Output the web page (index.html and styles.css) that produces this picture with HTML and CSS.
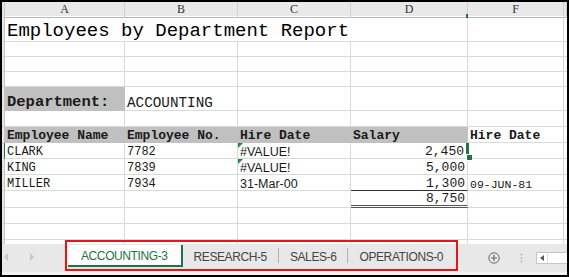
FILE: index.html
```html
<!DOCTYPE html>
<html lang="en">
  <head>
    <meta charset="UTF-8" />
    <title>Employees by Department Report</title>
    <link rel="stylesheet" href="styles.css">
  </head>
  <body>
    <div class="window">
      <!-- Sheet grid -->
      <div class="sheet">
        <div class="row heads">
          <div class="rh"></div>
          <div class="ch">A</div>
          <div class="ch">B</div>
          <div class="ch">C</div>
          <div class="ch ch-mark">D</div>
          <div class="ch">F</div>
          <div class="ch"></div>
        </div>
        <div class="row tall">
          <div class="rh"></div>
          <div class="c title">Employees by Department Report</div>
          <div class="c"></div>
          <div class="c"></div>
        </div>
        <div class="row short">
          <div class="rh"></div>
          <div class="c"></div><div class="c"></div><div class="c"></div>
          <div class="c"></div><div class="c"></div><div class="c"></div>
        </div>
        <div class="row short">
          <div class="rh"></div>
          <div class="c"></div><div class="c"></div><div class="c"></div>
          <div class="c"></div><div class="c"></div><div class="c"></div>
        </div>
        <div class="row short">
          <div class="rh"></div>
          <div class="c"></div><div class="c"></div><div class="c"></div>
          <div class="c"></div><div class="c"></div><div class="c"></div>
        </div>
        <div class="row dept">
          <div class="rh"></div>
          <div class="c fill dept-label">Department:</div>
          <div class="c dept-name">ACCOUNTING</div>
          <div class="c"></div><div class="c"></div><div class="c"></div><div class="c"></div>
        </div>
        <div class="row">
          <div class="rh"></div>
          <div class="c"></div><div class="c"></div><div class="c"></div>
          <div class="c"></div><div class="c"></div><div class="c"></div>
        </div>
        <div class="row">
          <div class="rh"></div>
          <div class="c fill th">Employee Name</div>
          <div class="c fill th">Employee No.</div>
          <div class="c fill th">Hire Date</div>
          <div class="c fill th">Salary</div>
          <div class="c th">Hire Date</div>
          <div class="c"></div>
        </div>
        <div class="row">
          <div class="rh on"></div>
          <div class="c">CLARK</div>
          <div class="c">7782</div>
          <div class="c sans err">#VALUE!</div>
          <div class="c num active">2,450</div>
          <div class="c sel"></div>
          <div class="c"></div>
        </div>
        <div class="row">
          <div class="rh"></div>
          <div class="c">KING</div>
          <div class="c">7839</div>
          <div class="c sans err">#VALUE!</div>
          <div class="c num">5,000</div>
          <div class="c"></div>
          <div class="c"></div>
        </div>
        <div class="row">
          <div class="rh"></div>
          <div class="c">MILLER</div>
          <div class="c">7934</div>
          <div class="c sans">31-Mar-00</div>
          <div class="c num sub">1,300</div>
          <div class="c small">09-JUN-81</div>
          <div class="c"></div>
        </div>
        <div class="row total">
          <div class="rh"></div>
          <div class="c"></div><div class="c"></div><div class="c"></div>
          <div class="c num sum">8,750</div>
          <div class="c"></div><div class="c"></div>
        </div>
        <div class="row">
          <div class="rh"></div>
          <div class="c"></div><div class="c"></div><div class="c"></div>
          <div class="c"></div><div class="c"></div><div class="c"></div>
        </div>
        <div class="row">
          <div class="rh"></div>
          <div class="c"></div><div class="c"></div><div class="c"></div>
          <div class="c"></div><div class="c"></div><div class="c"></div>
        </div>
        <div class="row cut">
          <div class="rh"></div>
          <div class="c"></div><div class="c"></div><div class="c"></div>
          <div class="c"></div><div class="c"></div><div class="c"></div>
        </div>
      </div>

      <!-- Sheet tabs -->
      <div class="tabbar">
        <div class="nav">
          <svg width="63" height="28" viewBox="0 0 63 28">
            <polygon points="6,9 2,13 6,17" fill="#c6c6c6" />
            <polygon points="28,9 32,13 28,17" fill="#c6c6c6" />
          </svg>
        </div>
        <div class="tabs">
          <div class="tab active">ACCOUNTING-3</div>
          <div class="tab">RESEARCH-5</div>
          <div class="sep"></div>
          <div class="tab">SALES-6</div>
          <div class="sep"></div>
          <div class="tab">OPERATIONS-0</div>
        </div>
        <div class="add">
          <svg width="12" height="12" viewBox="0 0 12 12">
            <circle cx="6" cy="6" r="5.2" fill="none" stroke="#6a6a6a" stroke-width="1" />
            <path d="M6 3v6M3 6h6" stroke="#6a6a6a" stroke-width="1.2" />
          </svg>
        </div>
        <div class="grip">
          <svg width="3" height="10" viewBox="0 0 3 10">
            <circle cx="1.5" cy="1.5" r="0.9" fill="#b4b4b4" />
            <circle cx="1.5" cy="5" r="0.9" fill="#b4b4b4" />
            <circle cx="1.5" cy="8.5" r="0.9" fill="#b4b4b4" />
          </svg>
        </div>
        <div class="hscroll">
          <div class="hs-btn">
            <svg width="4" height="6" viewBox="0 0 4 6">
              <polygon points="4,0 0,3 4,6" fill="#555" />
            </svg>
          </div>
        </div>
      </div>
      <div class="status"></div>
    </div>
  </body>
</html>
```

FILE: styles.css
```css
* {
  margin: 0;
  padding: 0;
  box-sizing: border-box;
}

body {
  background: #fff;
  font-family: "Liberation Mono", monospace;
}

.window {
  width: 569px;
  height: 277px;
  border: 2px solid #000;
  overflow: hidden;
  background: #fff;
}

/* Grid rows */
.row {
  display: grid;
  grid-template-columns: 3px 120px 113px 113px 117px 96px 1fr;
  height: 16px;
}

.row.heads {
  height: 14px;
  background: #e9e9e9;
}

.row.tall {
  height: 26px;
}

.row.short {
  height: 15px;
}

.row.dept {
  height: 24px;
}

.row.total {
  height: 17px;
}

.row.cut {
  height: 4px;
}

.rh {
  background: #e6e6e6;
  border-right: 1px solid #c4c4c4;
  border-bottom: 1px solid #d2d2d2;
}

.rh.on {
  border-right-color: #217346;
}

.ch {
  display: flex;
  align-items: center;
  justify-content: center;
  border-right: 1px solid #d0d0d0;
  border-bottom: 1px solid #b9b9b9;
  font-family: "Liberation Serif", serif;
  font-size: 12px;
  color: #333;
}

.ch-mark {
  position: relative;
}

.ch-mark::after {
  content: "";
  position: absolute;
  right: -1px;
  bottom: -1px;
  width: 2px;
  height: 4px;
  background: #217346;
}

.c {
  display: flex;
  align-items: flex-end;
  padding: 0 2px;
  border-right: 1px solid #dadada;
  border-bottom: 1px solid #dadada;
  font-size: 12px;
  line-height: 1;
  color: #1a1a1a;
  white-space: nowrap;
}

.row.cut .c {
  border-bottom: none;
}

.title {
  grid-column: span 4;
  font-size: 19px;
  color: #000;
}

.fill {
  background: #c0c0c0;
  border-color: #c0c0c0;
}

.dept-label {
  font-size: 15.5px;
  font-weight: bold;
}

.dept-name {
  font-size: 14.3px;
}

.th {
  font-size: 13px;
  font-weight: bold;
}

.sans {
  font-family: "Liberation Sans", sans-serif;
  font-size: 12.5px;
}

.err {
  position: relative;
}

.err::before {
  content: "";
  position: absolute;
  top: 0;
  left: 0;
  border-top: 5px solid #1e8a3e;
  border-right: 5px solid transparent;
}

.num {
  justify-content: flex-end;
  font-size: 13px;
}

.small {
  font-size: 11.5px;
}

.sub {
  border-bottom-color: #333;
}

.sum {
  border-bottom: 3px double #555;
}

/* active (hidden column E) cell */
.active {
  border-right: 2px solid #217346;
}

.sel {
  position: relative;
  box-shadow: inset 1px 0 0 #217346;
}

.sel::after {
  content: "";
  position: absolute;
  left: -2px;
  bottom: -3px;
  width: 5px;
  height: 5px;
  background: #217346;
  border: 1px solid #fff;
}

/* Sheet tabs */
.tabbar {
  display: flex;
  align-items: flex-start;
  height: 28px;
  background: #e8e8e8;
}

.nav {
  width: 63px;
  height: 28px;
}

.tabs {
  position: relative;
  display: flex;
  align-items: flex-start;
  height: 31px;
  margin-top: -4px;
  padding: 3px 2px 0 1px;
  border: 2px solid #e8141a;
  font-family: "Liberation Sans", sans-serif;
  font-size: 12px;
  letter-spacing: -0.4px;
}

.tab {
  display: flex;
  align-items: center;
  height: 22px;
  padding: 1px 11px 0;
  color: #444;
}

.tab.active {
  padding: 1px 13px 0;
  background: #fff;
  color: #217346;
  border-bottom: 2px solid #217346;
}

.sep {
  width: 1px;
  height: 15px;
  margin-top: 3px;
  background: #b3b3b3;
}

.add {
  display: flex;
  margin: 8px 0 0 30px;
}

.grip {
  display: flex;
  margin: 9px 0 0 20px;
}

.hscroll {
  flex: 1;
  display: flex;
  height: 12px;
  margin: 8px 0 0 13px;
  background: #fff;
  border: 1px solid #c6c6c6;
  border-right: none;
}

.hs-btn {
  display: flex;
  align-items: center;
  justify-content: center;
  width: 11px;
  border-right: 1px solid #dcdcdc;
}

.status {
  height: 3px;
  background: #f2f2f2;
}
```
